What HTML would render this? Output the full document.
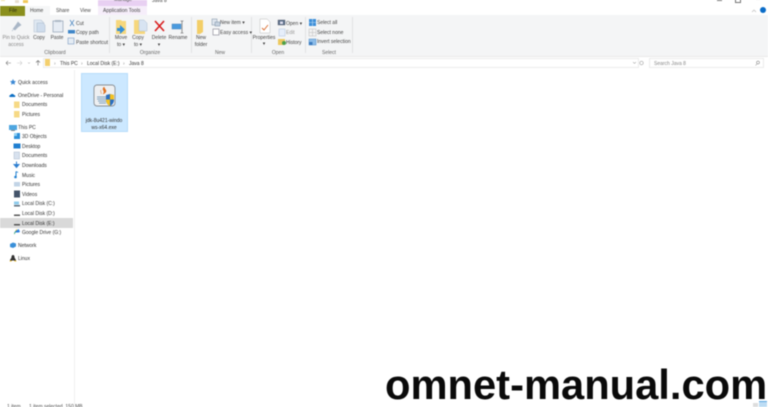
<!DOCTYPE html>
<html><head><meta charset="utf-8">
<style>
html,body{margin:0;padding:0;width:768px;height:407px;overflow:hidden;background:#fff}
body{position:relative;font-family:"Liberation Sans",sans-serif}
#w{position:absolute;left:0;top:0;width:768px;height:407px;filter:blur(.45px)}
.a{position:absolute}
.t{position:absolute;font-size:5px;line-height:6px;color:#444;white-space:nowrap;margin-top:1px}
.c{text-align:center;transform:translateX(-50%)}
.n{position:absolute;font-size:5px;line-height:6px;color:#333;white-space:nowrap;margin-top:1px}
.g{color:#666}
svg{position:absolute;overflow:visible}
</style></head><body>
<div id="w">
<!-- ribbon background -->
<div class="a" style="left:0;top:15px;width:768px;height:41px;background:#f4f5f6;border-bottom:1px solid #e8e8e8"></div>
<!-- title/top -->
<div class="a" style="left:98px;top:0;width:49px;height:6px;background:#e8d0f2"></div>
<div class="a" style="left:98px;top:6px;width:49px;height:9px;background:#f6eefa"></div>
<div class="t" style="left:114px;top:-4px;color:#555">Manage</div>
<div class="t" style="left:152px;top:-3px">Java 8</div>
<div class="a" style="left:1px;top:0;width:4px;height:1px;background:#efe0a8"></div>
<div class="a" style="left:15px;top:0;width:4px;height:3px;background:#e8e0d0"></div>
<div class="a" style="left:23px;top:0;width:5px;height:3px;background:#f1c95b"></div>
<div class="a" style="left:0;top:6px;width:25px;height:10px;background:#8a8f1d"></div>
<div class="t" style="left:9px;top:7px;color:#2a2a10">File</div>
<div class="a" style="left:25px;top:6px;width:25px;height:10px;background:#f5f6f7"></div>
<div class="t" style="left:30px;top:7px">Home</div>
<div class="t" style="left:56px;top:7px">Share</div>
<div class="t" style="left:80px;top:7px">View</div>
<div class="t" style="left:103px;top:7px">Application Tools</div>
<div class="a" style="left:717px;top:0;width:5px;height:1px;background:#777"></div>
<div class="a" style="left:735px;top:-2px;width:4px;height:3px;border:1px solid #777"></div>
<div class="t" style="left:756px;top:-5px">✕</div>
<svg style="left:0;top:0" width="768" height="20"><path d="M752 12l2-2 2 2" fill="none" stroke="#bbb" stroke-width=".7"/></svg>
<div class="a" style="left:760px;top:7px;width:6px;height:6px;border-radius:50%;background:#0a6cc8"></div>

<!-- ribbon separators -->
<div class="a" style="left:109px;top:17px;width:1px;height:36px;background:#e2e3e4"></div>
<div class="a" style="left:191px;top:17px;width:1px;height:36px;background:#e2e3e4"></div>
<div class="a" style="left:251px;top:17px;width:1px;height:36px;background:#e2e3e4"></div>
<div class="a" style="left:305px;top:17px;width:1px;height:36px;background:#e2e3e4"></div>
<div class="a" style="left:352px;top:17px;width:1px;height:36px;background:#e2e3e4"></div>

<!-- clipboard -->
<svg style="left:0;top:0" width="768" height="60">
<path d="M13 29l3-4 2-3 3 3-3 2-3 3zM13 30l-1 1" fill="#a9b6c6" stroke="#a9b6c6" stroke-width=".6"/>
<path d="M34 20h7l3 3v9h-10z" fill="#dfe8f2" stroke="#b9c6d4" stroke-width=".6"/>
<path d="M37 23h6l2 2v7h-8z" fill="#cfdcec" stroke="#a9bacd" stroke-width=".5"/>
<rect x="53" y="21" width="10" height="11" fill="#e6ecf4" stroke="#93a3b6" stroke-width=".7"/>
<rect x="55" y="20" width="6" height="2" fill="#aeb9c6"/>
<path d="M70 20l2 3 2-3M72 23l-2 3M72 23l2 3" fill="none" stroke="#4a86c0" stroke-width=".7"/>
<rect x="68" y="30" width="7" height="3.500" fill="#3f86c8"/>
<rect x="68" y="38" width="6" height="6" fill="#e4ecf4" stroke="#7e9cc0" stroke-width=".6"/>
<!-- organize -->
<path d="M116 20h5l1 1h4v13h-10z" fill="#f6d77c"/>
<path d="M121 28h3v-3l5 4.500-5 4.500v-3h-3z" fill="#2f8fdc" transform="translate(-4 0)"/>
<path d="M134 20h5l1 1h5v13h-11z" fill="#f6d77c"/>
<path d="M139 20h5l3 3v8h-8z" fill="#d8e4f2" stroke="#b0c0d2" stroke-width=".5"/>
<path d="M155 21l9 10M164 21l-9 10" stroke="#d81e1e" stroke-width="1.600" fill="none"/>
<rect x="172" y="24" width="9" height="5" fill="#4a9ade" stroke="#3a78b0" stroke-width=".4"/>
<path d="M182 21v12M180.500 21h3M180.500 33h3" stroke="#555" stroke-width=".6" fill="none"/>
<!-- new -->
<path d="M197 20h6v12l-3 2h-3z" fill="#f3ce67"/>
<rect x="212" y="19" width="5" height="6" fill="#dfe6ee" stroke="#7b8da2" stroke-width=".5"/>
<rect x="215" y="22" width="5" height="4" fill="#c6d2e0" stroke="#7b8da2" stroke-width=".5"/>
<rect x="213" y="29" width="6" height="6" fill="#fff" stroke="#667" stroke-width=".5"/>
<!-- open -->
<path d="M260 19h7l3 3v11h-10z" fill="#fff" stroke="#bbb" stroke-width=".5"/>
<path d="M262 28l2 2 4-5" fill="none" stroke="#d9692a" stroke-width=".9"/>
<rect x="278" y="20" width="7" height="5" fill="#5a6e88" stroke="#445" stroke-width=".3"/>
<rect x="280" y="21.500" width="3" height="2.500" fill="#dde"/>
<rect x="279" y="29" width="6" height="7" fill="#e6eefa" stroke="#aec4e0" stroke-width=".5"/>
<rect x="278" y="39" width="7" height="6" fill="#edc95f"/>
<circle cx="284" cy="43" r="2" fill="#4ea04a"/>
<!-- select -->
<rect x="309" y="19" width="7" height="7" fill="#3c8ed8"/><path d="M312.500 19v7M309 22.500h7" stroke="#bcdcf6" stroke-width=".6"/>
<rect x="309" y="29" width="7" height="7" fill="#f2f2f2" stroke="#bbb" stroke-width=".5"/><path d="M312.500 29v7M309 32.500h7" stroke="#bbb" stroke-width=".5"/>
<rect x="309" y="39" width="7" height="6" fill="#8cbce8" stroke="#4c8cc8" stroke-width=".5"/><rect x="309" y="42" width="3.500" height="3" fill="#3c7cc0"/>
</svg>
<div class="t c g" style="left:16px;top:34px;color:#888">Pin to Quick</div>
<div class="t c g" style="left:16px;top:41px;color:#888">access</div>
<div class="t c" style="left:39px;top:34px">Copy</div>
<div class="t c" style="left:57px;top:34px">Paste</div>
<div class="t" style="left:76px;top:20px">Cut</div>
<div class="t" style="left:76px;top:29px">Copy path</div>
<div class="t" style="left:76px;top:39px">Paste shortcut</div>
<div class="t c g" style="left:55px;top:49px">Clipboard</div>
<div class="t c" style="left:121px;top:34px">Move</div>
<div class="t c" style="left:121px;top:41px">to ▾</div>
<div class="t c" style="left:138px;top:34px">Copy</div>
<div class="t c" style="left:138px;top:41px">to ▾</div>
<div class="t c" style="left:159px;top:34px">Delete</div>
<div class="t c" style="left:159px;top:41px">▾</div>
<div class="t c" style="left:178px;top:34px">Rename</div>
<div class="t c g" style="left:150px;top:49px">Organize</div>
<div class="t c" style="left:201px;top:34px">New</div>
<div class="t c" style="left:201px;top:41px">folder</div>
<div class="t" style="left:220px;top:19px">New item ▾</div>
<div class="t" style="left:220px;top:29px">Easy access ▾</div>
<div class="t c g" style="left:220px;top:49px">New</div>
<div class="t c" style="left:264px;top:34px">Properties</div>
<div class="t c" style="left:264px;top:40px">▾</div>
<div class="t" style="left:286px;top:20px">Open ▾</div>
<div class="t" style="left:286px;top:29px;color:#999">Edit</div>
<div class="t" style="left:286px;top:39px">History</div>
<div class="t c g" style="left:278px;top:49px">Open</div>
<div class="t" style="left:317px;top:19px">Select all</div>
<div class="t" style="left:317px;top:29px">Select none</div>
<div class="t" style="left:317px;top:38px">Invert selection</div>
<div class="t c g" style="left:329px;top:49px">Select</div>

<!-- address bar -->
<svg style="left:0;top:56px" width="768" height="14">
<path d="M6 7h5M6 7l2-2M6 7l2 2" stroke="#777" stroke-width=".6" fill="none"/>
<path d="M17 7h5M22 7l-2-2M22 7l-2 2" stroke="#ccc" stroke-width=".6" fill="none"/>
<path d="M28 6.500l1 1 1-1" stroke="#999" stroke-width=".5" fill="none"/>
<path d="M38 9.500v-5M38 4.500l-2 2M38 4.500l2 2" stroke="#666" stroke-width=".6" fill="none"/>
<rect x="43.500" y="2.500" width="595" height="9" fill="#fff" stroke="#e4e4e4" stroke-width=".7"/>
<rect x="45" y="3" width="5" height="7" fill="#f3cf6d"/>
<path d="M633 6l1.500 1.500 1.500-1.500" stroke="#777" stroke-width=".5" fill="none"/>
<circle cx="641.500" cy="7" r="1.800" stroke="#888" stroke-width=".5" fill="none"/>
<rect x="649.500" y="2.500" width="114" height="9" fill="#fff" stroke="#e4e4e4" stroke-width=".7"/>
<circle cx="758" cy="6.500" r="1.500" stroke="#666" stroke-width=".5" fill="none"/><path d="M757 8l-1.500 1.500" stroke="#666" stroke-width=".5"/>
</svg>
<div class="t" style="left:54px;top:60px;color:#888">›</div>
<div class="t" style="left:60px;top:60px;color:#333">This PC</div>
<div class="t" style="left:81px;top:60px;color:#888">›</div>
<div class="t" style="left:87px;top:60px;color:#333">Local Disk (E:)</div>
<div class="t" style="left:123px;top:60px;color:#888">›</div>
<div class="t" style="left:129px;top:60px;color:#333">Java 8</div>
<div class="t" style="left:654px;top:60px;color:#888">Search Java 8</div>

<!-- nav -->
<div class="a" style="left:74px;top:70px;width:1px;height:337px;background:#f0f0f0"></div>
<div class="a" style="left:0;top:218px;width:73px;height:10px;background:#d9d9d9"></div>
<svg style="left:0;top:0" width="80" height="270">
<path d="M13 79l1 2 2 .3-1.500 1.500.4 2-1.900-1-1.900 1 .4-2L10 81.300l2-.3z" fill="#3b88d4"/>
<path d="M10 97c-1 0-1-2 .5-2 .5-1.500 3-1.500 3.500 0 1.500 0 2 2 .5 2z" fill="#0d6fc4"/>
<rect x="14" y="101.500" width="5.500" height="6.500" fill="#f6d985"/>
<rect x="14" y="111" width="5.500" height="6.500" fill="#f6d985"/>
<rect x="9" y="125" width="8" height="5" fill="#4ea6e0"/><rect x="11" y="130" width="4" height="1" fill="#888"/>
<rect x="14" y="133" width="6" height="6" fill="#2d8fd8"/><rect x="14" y="133" width="3" height="3" fill="#8fd0f4"/>
<rect x="13.500" y="143.500" width="7" height="5" fill="#1f7fd0"/>
<rect x="14" y="152" width="5.500" height="7" fill="#d8e2ee" stroke="#9fb0c4" stroke-width=".4"/>
<path d="M16.500 161.500v4M14 164.500h5l-2.500 3z" fill="#2f7fd0" stroke="#2f7fd0" stroke-width="1"/>
<path d="M16 171.500v5.500" stroke="#1f7fd0" stroke-width="1"/><circle cx="15.500" cy="177" r="1.300" fill="#1f7fd0"/><path d="M16 171.500l2 1" stroke="#1f7fd0" stroke-width=".8"/>
<rect x="14" y="182" width="6" height="4.500" fill="#c2d4e6"/>
<rect x="14" y="190.500" width="6" height="7" fill="#44546a"/>
<rect x="14" y="201.500" width="5" height="3" fill="#8ecbec"/><rect x="14" y="205" width="6" height="1.500" fill="#5a6a78"/>
<rect x="14" y="214.500" width="6" height="1.500" fill="#555"/>
<rect x="14" y="224" width="6" height="1.500" fill="#555"/>
<path d="M16.500 229l2 3.500h-4z" fill="#f7c325"/><path d="M14 232.500h5l1-1-1.500-2.500z" fill="#2e7fe0"/><path d="M14.500 234.500l2-5-2.500 4z" fill="#1ea362"/>
<path d="M10 244l3-1.500 3 1v3l-3 1.500-3-1z" fill="#3a8fd8"/>
<path d="M13 255c-1 0-1.500 1-1.500 2 0 1.500-1.500 2-1.500 3.500h6c0-1.500-1.500-2-1.500-3.500 0-1-.5-2-1.500-2z" fill="#333"/><path d="M10 260.500h2l-.5 1h-2zM14 260.500h2l.5 1h-2z" fill="#e8b82a"/>
</svg>
<div class="n" style="left:18px;top:79px">Quick access</div>
<div class="n" style="left:18px;top:92px">OneDrive - Personal</div>
<div class="n" style="left:22px;top:101px">Documents</div>
<div class="n" style="left:22px;top:111px">Pictures</div>
<div class="n" style="left:18px;top:124px">This PC</div>
<div class="n" style="left:22px;top:133px">3D Objects</div>
<div class="n" style="left:22px;top:143px">Desktop</div>
<div class="n" style="left:22px;top:152px">Documents</div>
<div class="n" style="left:22px;top:162px">Downloads</div>
<div class="n" style="left:22px;top:172px">Music</div>
<div class="n" style="left:22px;top:181px">Pictures</div>
<div class="n" style="left:22px;top:191px">Videos</div>
<div class="n" style="left:22px;top:200px">Local Disk (C:)</div>
<div class="n" style="left:22px;top:210px">Local Disk (D:)</div>
<div class="n" style="left:22px;top:220px">Local Disk (E:)</div>
<div class="n" style="left:22px;top:229px">Google Drive (G:)</div>
<div class="n" style="left:18px;top:242px">Network</div>
<div class="n" style="left:18px;top:255px">Linux</div>

<!-- selected file -->
<div class="a" style="left:81px;top:73px;width:45px;height:57px;background:#cce8ff;border:1px solid #b8dcfb"></div>
<svg style="left:0;top:0" width="140" height="120">
<rect x="94" y="85" width="21" height="21" rx="3" fill="#eef0f2" stroke="#8a8f96" stroke-width=".9"/>
<path d="M104 87c-3 3 2 4-1 7 3-1 4-3 2-5zM101 90c-1 2 1 3 0 4" fill="#e0701e" stroke="#e0701e" stroke-width=".5"/>
<path d="M97 97h9M97 99h10M98 101h8M99 103h7" stroke="#5a86ae" stroke-width=".8"/>
<path d="M106 95l4-1 4 1v5c0 3-2 5-4 6-2-1-4-3-4-6z" fill="#2b6fc0"/>
<path d="M110 94l4 1v4.500h-4zM106 99.500h4v6.500c-2-1-4-3-4-6.500z" fill="#f4c220"/>
</svg>
<div class="t c" style="left:104px;top:117px;color:#333">jdk-8u421-windo</div>
<div class="t c" style="left:104px;top:124px;color:#333">ws-x64.exe</div>

<!-- status -->
<div class="t" style="left:7px;top:403px;color:#555">1 item</div>
<div class="t" style="left:29px;top:403px;color:#555">1 item selected&nbsp; 150 MB</div>
<div class="a" style="left:753px;top:403px;width:5px;height:4px;background:#ddd"></div>
<div class="a" style="left:759px;top:401px;width:8px;height:6px;background:#bcdcf4;border-top:1px solid #5aa6e0;box-sizing:border-box"></div>

<!-- watermark -->
<div class="a" style="left:385px;top:363px;font-size:41.7px;line-height:44px;font-weight:700;color:#0a0a0a;white-space:nowrap">omnet-manual.com</div>
</div>
</body></html>
